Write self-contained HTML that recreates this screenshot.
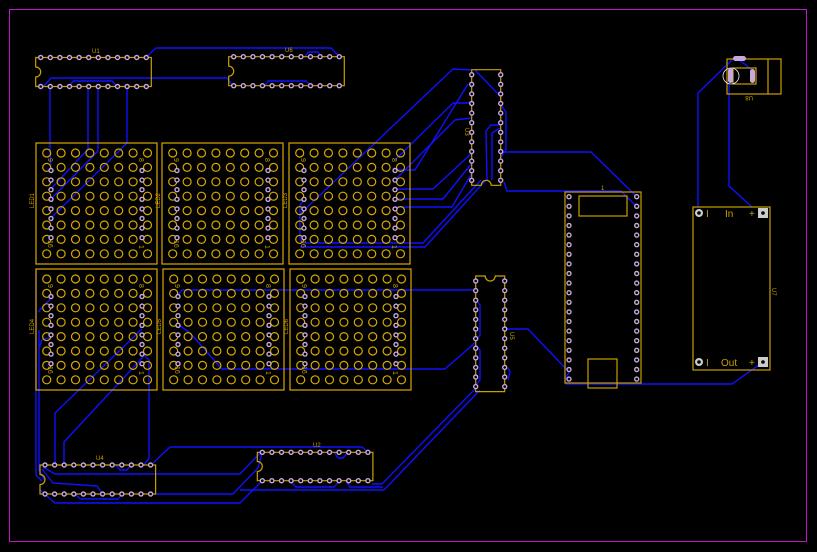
<!DOCTYPE html>
<html><head><meta charset="utf-8"><style>
html,body{margin:0;padding:0;background:#000;width:817px;height:552px;overflow:hidden}
svg{display:block}
text{font-family:"Liberation Sans",sans-serif;fill:#c8a000}
</style></head><body>
<svg id="s" width="817" height="552" viewBox="0 0 817 552" xmlns="http://www.w3.org/2000/svg">
<rect x="0" y="0" width="817" height="552" fill="#000"/>
<g shape-rendering="crispEdges" fill="#c810c8">
<rect x="9" y="9" width="798" height="1"/>
<rect x="9" y="541" width="798" height="1"/>
<rect x="9" y="9" width="1" height="533"/>
<rect x="806" y="9" width="1" height="533"/>
</g>
<g id="tr" fill="none" stroke="#1010ff" stroke-width="1.4" stroke-linejoin="round"></g>
<g id="silk" fill="none" stroke="#c8a000" stroke-width="1.2"></g>
<g id="pads"></g>
<g font-size="6">
<text x="92" y="53">U1</text>
<text x="285" y="52">U6</text>
<text x="96" y="460">U4</text>
<text x="313" y="447">U2</text>
<text x="601" y="190">1</text>
<text x="747" y="100" transform="rotate(180 750 98)">U8</text>
<text transform="translate(465,128) rotate(90)">U3</text>
<text transform="translate(510,332) rotate(90)">U5</text>
<text transform="translate(772,288) rotate(90)">U7</text>
<text transform="translate(34,208) rotate(-90)">LED1</text>
<text transform="translate(160,208) rotate(-90)">LED2</text>
<text transform="translate(287,208) rotate(-90)">LED3</text>
<text transform="translate(34,334) rotate(-90)">LED4</text>
<text transform="translate(161,334) rotate(-90)">LED5</text>
<text transform="translate(288,334) rotate(-90)">LED6</text>
</g>
<g font-size="10">
<text x="706" y="217">I</text><text x="725" y="217">In</text><text x="749" y="217">+</text>
<text x="706" y="366">I</text><text x="721" y="366">Out</text><text x="749" y="366">+</text>
</g>
</svg>
<script>
var NS="http://www.w3.org/2000/svg";
var tr=document.getElementById('tr'),silk=document.getElementById('silk'),pads=document.getElementById('pads'),s=document.getElementById('s');
function el(p,t,a){var e=document.createElementNS(NS,t);for(var k in a)e.setAttribute(k,a[k]);p.appendChild(e);return e;}
function pl(pts){el(tr,'polyline',{points:pts});}
function pin(x,y){el(pads,'circle',{cx:x,cy:y,r:2.7,fill:'#c8a8dc'});el(pads,'circle',{cx:x,cy:y,r:1.3,fill:'#000'});}
function txt(x,y,t,rot,sz){var e=el(s,'text',{x:0,y:0,'font-size':sz||7,transform:'translate('+x+','+y+') rotate('+(rot||0)+')'});e.textContent=t;}
function led(bx,by){
 el(silk,'rect',{x:bx,y:by,width:121,height:121,stroke:'#d8a800'});
 for(var i=0;i<8;i++)for(var j=0;j<8;j++)el(silk,'circle',{cx:bx+10.7+i*14.4,cy:by+10+j*14.4,r:4,stroke:'#d8a800'});
 for(var k=0;k<8;k++){pin(bx+15,by+27.5+k*9.6);pin(bx+106,by+27.5+k*9.6);}
 txt(bx+12,by+15,'9',90);txt(bx+103,by+15,'8',90);txt(bx+12,by+97,'16',90);txt(bx+103,by+102,'1',90);
}
function dipH(x0,yt,yb){
 var x1=x0+11*9.6;
 el(silk,'path',{d:'M'+(x0-5)+' '+yt+'H'+(x1+5)+'V'+yb+'H'+(x0-5)+'V'+((yt+yb)/2+5)+'A5 5 0 0 0 '+(x0-5)+' '+((yt+yb)/2-5)+'Z'});
 for(var i=0;i<12;i++){pin(x0+i*9.6,yt);pin(x0+i*9.6,yb);}
}
function dipV(xl,xr,y0,notchTop){
 var y1=y0+11*9.6;
 if(notchTop) el(silk,'path',{d:'M'+xl+' '+(y0-5)+'H'+((xl+xr)/2-5)+'A5 5 0 0 0 '+((xl+xr)/2+5)+' '+(y0-5)+'H'+xr+'V'+(y1+5)+'H'+xl+'Z'});
 else el(silk,'path',{d:'M'+xl+' '+(y0-5)+'H'+xr+'V'+(y1+5)+'H'+((xl+xr)/2+5)+'A5 5 0 0 0 '+((xl+xr)/2-5)+' '+(y1+5)+'H'+xl+'Z'});
 for(var i=0;i<12;i++){pin(xl,y0+i*9.6);pin(xr,y0+i*9.6);}
}
[
"146,57 156,48 331,48 340,57","305,57 308,52 318,52 321,57",
"43,87 51,78 227,78 233,86","69,87 73,81 112,81 117,87","265,86 268,81 306,81 311,86",
"50,87 50,153 51,170","88,87 88,149 51,189","98,87 98,151 51,199","127,87 127,143 51,218",
"471,70 453,69 300,214","468,84 415,170 394,170","471,103 453,103 395,160","471,118 455,120 395,180",
"472,153 433,189 395,189","472,163 443,199 395,199","472,173 452,207 395,207",
"481,180 423,243 305,243","486,180 425,247 300,247","304,200 300,205 300,240 305,245",
"475,70 500,96","500,104 506,112 506,150 500,158","500,152 591,152 636,196",
"504,182 507,191 621,191 636,206","487,180 486,131 491,125 500,125","492,180 492,133 500,128",
"476,290 182,290 178,295","476,342 445,369 222,369 190,333 179,325",
"505,329 528,329 569,372 565,380 566,384 732,384 763,362",
"476,388 382,484 372,484","480,390 384,490 240,490",
"733,59 698,93 698,207","729,83 729,186 752,207","738,59 752,70",
"153,463 170,447 362,447 368,452","116,465 120,470 127,470 131,465",
"43,467 55,474 240,474 260,453","42,469 53,483 97,486 102,493",
"75,494 80,499 118,499 122,494","155,494 233,494 258,468 262,453",
"40,490 55,503 240,503 262,481","290,481 296,487 334,487 340,481","346,481 350,487 383,487",
"334,452 338,458 343,458 348,452",
"36,270 36,475 42,481","39,330 39,470 45,481","55,465 55,413 142,329","64,465 64,442 143,357","144,465 149,458 149,360 144,355",
"52,297 38,312","52,337 42,340 39,348","476,300 480,305 480,335 476,340","476,385 480,380 480,350 476,345",
"508,368 510,372 508,380"
].forEach(pl);
led(36,143);led(162,143);led(289,143);led(36,269);led(163,269);led(290,269);
dipH(40.7,57.5,86.5);dipH(233.7,56.7,85.7);dipH(45,465,494);dipH(262.3,452.3,480.7);
dipV(471.7,500.7,74.7,false);dipV(475.7,504.7,281,true);
el(silk,'rect',{x:565,y:192,width:76,height:191});
el(silk,'rect',{x:579,y:196,width:48,height:20});
el(silk,'rect',{x:588,y:359,width:29,height:29});
for(var i=0;i<20;i++){pin(569,196.7+i*9.6);pin(636.7,196.7+i*9.6);}
el(silk,'rect',{x:693,y:207,width:77,height:163});
[[699,213],[699,362]].forEach(function(p){el(pads,'circle',{cx:p[0],cy:p[1],r:4,fill:'#ccc'});el(pads,'circle',{cx:p[0],cy:p[1],r:1.8,fill:'#000'});});
[[763,213],[763,362]].forEach(function(p){el(pads,'rect',{x:p[0]-5,y:p[1]-5,width:10,height:10,fill:'#ccc'});el(pads,'circle',{cx:p[0],cy:p[1],r:1.8,fill:'#000'});});
el(silk,'rect',{x:727,y:59,width:54,height:35});
el(silk,'path',{d:'M768 59V94'});
el(silk,'rect',{x:733,y:68,width:23,height:16});
el(pads,'circle',{cx:731,cy:76,r:8,fill:'none',stroke:'#eee','stroke-width':0.8});
el(pads,'rect',{x:733,y:56,width:13,height:5,rx:2.5,fill:'#c8a8dc'});
el(pads,'rect',{x:728,y:68,width:5,height:15,rx:2.5,fill:'#c8a8dc'});
el(pads,'rect',{x:750,y:69,width:5,height:14,rx:2.5,fill:'#c8a8dc'});
</script>
</body></html>
